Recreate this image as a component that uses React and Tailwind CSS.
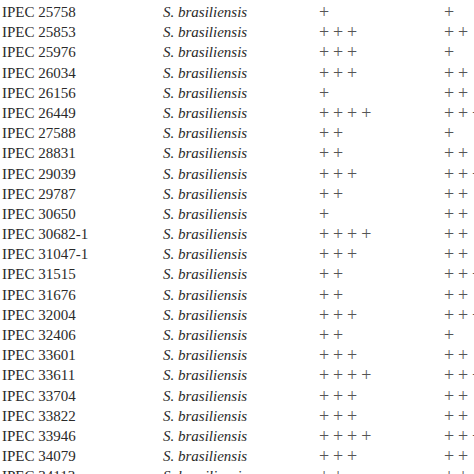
import React from 'react';

const rows = [
  ['IPEC 25758', '+', '+'],
  ['IPEC 25853', '+++', '++'],
  ['IPEC 25976', '+++', '+'],
  ['IPEC 26034', '+++', '++'],
  ['IPEC 26156', '+', '++'],
  ['IPEC 26449', '++++', '+++'],
  ['IPEC 27588', '++', '+'],
  ['IPEC 28831', '++', '++'],
  ['IPEC 29039', '+++', '+++'],
  ['IPEC 29787', '++', '++'],
  ['IPEC 30650', '+', '++'],
  ['IPEC 30682-1', '++++', '++'],
  ['IPEC 31047-1', '+++', '++'],
  ['IPEC 31515', '++', '+++'],
  ['IPEC 31676', '++', '++'],
  ['IPEC 32004', '+++', '+++'],
  ['IPEC 32406', '++', '+'],
  ['IPEC 33601', '+++', '++'],
  ['IPEC 33611', '++++', '+++'],
  ['IPEC 33704', '+++', '++'],
  ['IPEC 33822', '+++', '++'],
  ['IPEC 33946', '++++', '+++'],
  ['IPEC 34079', '+++', '++'],
  ['IPEC 34113', '++', '++'],
];

const App = () => {
  return (
    <div className="w-[474px] h-[474px] overflow-hidden bg-white pt-[2px] pl-[2px] font-['Liberation_Serif',serif] text-[15px] leading-[20.2px] text-[#2a2a2a]">
      {rows.map(([strain, growth, other]) => (
        <div key={strain} className="grid grid-cols-[161px_156px_125px_200px] h-[20.2px] whitespace-nowrap">
          <span>{strain}</span>
          <span className="italic">S. brasiliensis</span>
          <span className="text-[18px] tracking-[3.9px] text-[#555]">{growth}</span>
          <span className="text-[18px] tracking-[3.9px] text-[#555]">{other}</span>
        </div>
      ))}
    </div>
  );
};

export default App;
